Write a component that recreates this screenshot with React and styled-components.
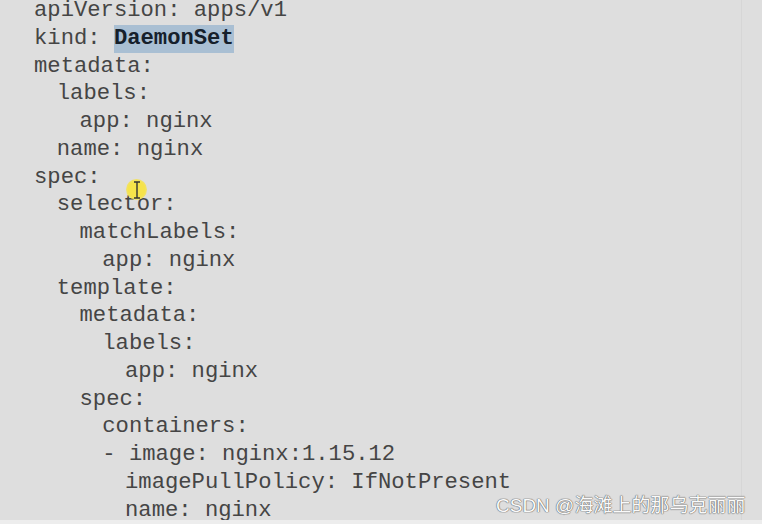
import React from 'react';
import styled, { createGlobalStyle } from 'styled-components';

const GlobalStyle = createGlobalStyle`
  html, body {
    margin: 0;
    padding: 0;
    background: #dfdfdf;
  }
`;

const Screen = styled.div`
  position: relative;
  width: 762px;
  height: 524px;
  overflow: hidden;
  background: #dedede;
  display: flex;
  flex-direction: column;
`;

const Editor = styled.div`
  flex: 1;
  width: 741px;
  border-right: 1px solid #d6d6d6;
  overflow: hidden;
`;

const Code = styled.div`
  margin-top: -3px;
  padding-left: 34px;
  font-family: "Courier New", "Liberation Mono", monospace;
  font-size: 22.2px;
  line-height: 27.75px;
  color: #454545;
  white-space: pre;
`;

const Line = styled.div`
  padding-left: ${p => p.level * 22.75}px;
  height: 27.75px;
`;

const Highlight = styled.span`
  background: #a9bfd3;
  color: #15202b;
  font-weight: bold;
  padding: 1px 0 2px;
`;

const BottomEdge = styled.div`
  height: 4px;
  background: #ededed;
`;

const Cursor = styled.div`
  position: absolute;
  left: 126px;
  top: 179px;
  width: 21px;
  height: 21px;
  border-radius: 50%;
  background: radial-gradient(circle, #f6e34a 55%, rgba(246, 227, 74, 0.6) 80%, rgba(246, 227, 74, 0) 100%);
  display: flex;
  align-items: center;
  justify-content: center;
`;

const Watermark = styled.div`
  position: absolute;
  left: 496px;
  bottom: 7px;
  font-family: "Liberation Sans", "Noto Sans CJK SC", sans-serif;
  font-size: 19px;
  color: #fafafa;
  text-shadow: 0 0 1px #6a6a6a, 0 0 1px #6a6a6a, 0 0 1px #6a6a6a;
`;

const lines = [
  [0, 'apiVersion: apps/v1'],
  [0, 'kind: ', 'DaemonSet'],
  [0, 'metadata:'],
  [1, 'labels:'],
  [2, 'app: nginx'],
  [1, 'name: nginx'],
  [0, 'spec:'],
  [1, 'selector:'],
  [2, 'matchLabels:'],
  [3, 'app: nginx'],
  [1, 'template:'],
  [2, 'metadata:'],
  [3, 'labels:'],
  [4, 'app: nginx'],
  [2, 'spec:'],
  [3, 'containers:'],
  [3, '- image: nginx:1.15.12'],
  [4, 'imagePullPolicy: IfNotPresent'],
  [4, 'name: nginx'],
];

export default function App() {
  return (
    <>
      <GlobalStyle />
      <Screen>
        <Editor>
          <Code>
            {lines.map(([level, text, hl], i) => (
              <Line key={i} level={level}>
                {text}
                {hl && <Highlight>{hl}</Highlight>}
              </Line>
            ))}
          </Code>
        </Editor>
        <BottomEdge />
        <Cursor>
          <svg width="10" height="18" viewBox="0 0 10 18">
            <path d="M2 1h6M5 1v16M2 17h6" stroke="#333" strokeWidth="1.4" fill="none" />
          </svg>
        </Cursor>
        <Watermark>CSDN @海滩上的那乌克丽丽</Watermark>
      </Screen>
    </>
  );
}
